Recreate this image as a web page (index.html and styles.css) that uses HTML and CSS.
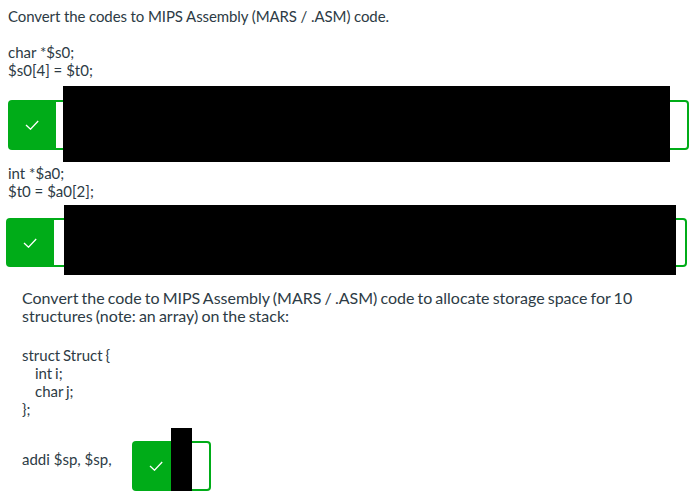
FILE: index.html
```html
<!DOCTYPE html>
<html lang="en">
<head>
  <meta charset="UTF-8" />
  <title>MIPS Assembly Quiz</title>
  <link rel="stylesheet" href="styles.css">
</head>
<body>
  <div class="question">
    <p class="prompt">Convert the codes to MIPS Assembly (MARS / .ASM) code.</p>
    <div class="code">char *$s0;<br>$s0[4] = $t0;</div>
    <div class="answer answer-wide first">
      <span class="mark">
        <svg width="14" height="10" viewBox="0 0 14 10"><path d="M1 5 L5.5 9.2 L13.2 1" fill="none" stroke="#fff" stroke-width="1.3"/></svg>
      </span>
      <span class="field"></span>
      <div class="redact redact-1"></div>
    </div>

    <div class="code code-2">int *$a0;<br>$t0 = $a0[2];</div>
    <div class="answer answer-wide second">
      <span class="mark">
        <svg width="14" height="10" viewBox="0 0 14 10"><path d="M1 5 L5.5 9.2 L13.2 1" fill="none" stroke="#fff" stroke-width="1.3"/></svg>
      </span>
      <span class="field"></span>
      <div class="redact redact-2"></div>
    </div>
  </div>

  <div class="question indented">
    <p class="prompt">Convert the code to MIPS Assembly (MARS / .ASM) code to allocate storage space for 10 structures (note: an array) on the stack:</p>
    <div class="code struct">
      <div>struct Struct {</div>
      <div class="inner">int i;</div>
      <div class="inner">char j;</div>
      <div>};</div>
    </div>
    <div class="inline-answer">
      <span class="label">addi $sp, $sp,</span>
      <div class="answer answer-small">
        <span class="mark">
          <svg width="14" height="10" viewBox="0 0 14 10"><path d="M1 5 L5.5 9.2 L13.2 1" fill="none" stroke="#fff" stroke-width="1.3"/></svg>
        </span>
        <span class="field"></span>
        <div class="redact redact-3"></div>
      </div>
    </div>
  </div>
</body>
</html>
```

FILE: styles.css
```css
:root {
  --text: #2d3b45;
  --green: #00ac18;
}

body {
  margin: 0;
  padding: 7px 8px 0;
  font-family: 'Lato', 'Liberation Sans', sans-serif;
  font-size: 15px;
  line-height: 18px;
  color: var(--text);
  background: #fff;
  overflow: hidden;
}

p {
  margin: 0;
}

.prompt {
  margin-bottom: 18px;
  letter-spacing: -0.1px;
}

.code {
  margin-bottom: 21px;
}

.code-2 {
  margin-top: 14px;
  margin-bottom: 18px;
}

.answer {
  position: relative;
  display: flex;
  height: 50px;
}

.answer-wide {
  width: 681px;
}

.answer.second {
  margin-left: -2px;
  height: 49px;
}

.mark {
  width: 48px;
  flex: none;
  background: var(--green);
  border-radius: 4px 0 0 4px;
  display: flex;
  align-items: center;
  justify-content: center;
}

.field {
  flex: 1;
  border: 2px solid var(--green);
  border-left: none;
  border-radius: 0 4px 4px 0;
  background: #fff;
}

.redact {
  position: absolute;
  background: #000;
}

.redact-1 {
  left: 55px;
  top: -14px;
  width: 607px;
  height: 76px;
}

.redact-2 {
  left: 58px;
  top: -13px;
  width: 612px;
  height: 70px;
}

.redact-3 {
  left: 39px;
  top: -13px;
  width: 21px;
  height: 69px;
}

.indented {
  padding-left: 14px;
  margin-top: 22px;
}

.indented .prompt {
  width: 640px;
  margin-bottom: 21px;
  font-size: 16px;
  letter-spacing: 0;
  word-spacing: -1px;
}

.struct {
  margin-bottom: 23px;
  word-spacing: -1px;
}

.struct .inner {
  padding-left: 13px;
}

.inline-answer {
  display: flex;
  align-items: flex-start;
}

.inline-answer .label {
  width: 110px;
  margin-top: 9px;
}

.answer-small {
  width: 79px;
}
```
